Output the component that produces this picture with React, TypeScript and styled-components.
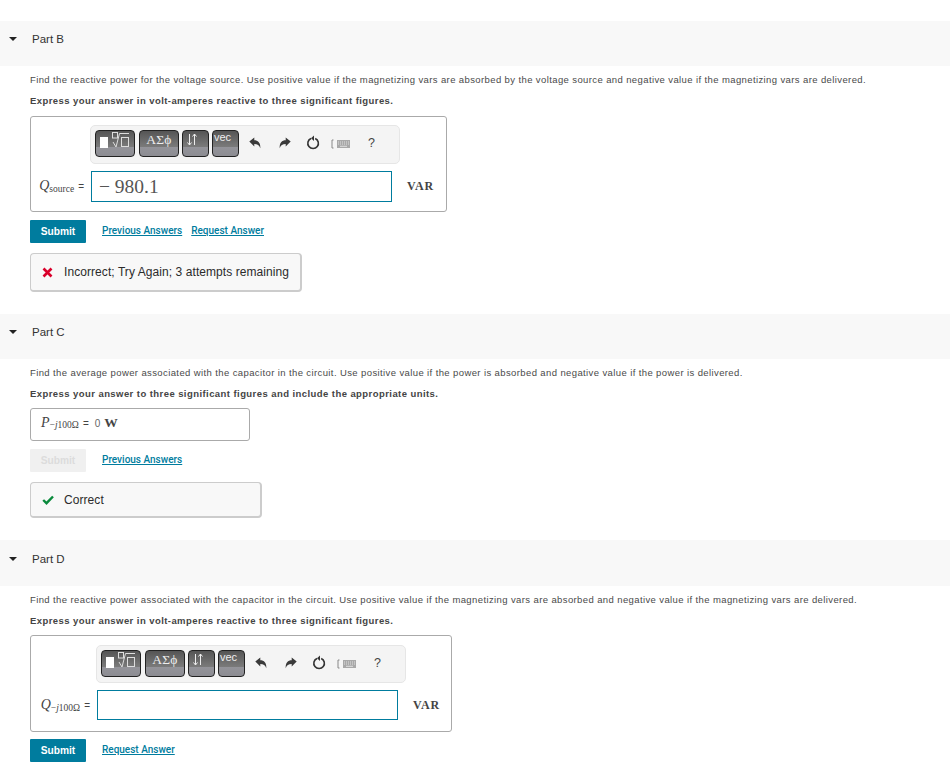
import styled, { createGlobalStyle } from "styled-components";

const Global = createGlobalStyle`
  html, body { margin: 0; padding: 0; background: #fff; }
  body { font-family: "Liberation Sans", Arial, sans-serif; color: #333; }
`;

const Page = styled.div`
  width: 950px;
  height: 777px;
  overflow: hidden;
  padding-top: 21px;
  box-sizing: border-box;
`;

const PartHeader = styled.div<{ $tall?: boolean }>`
  height: ${(p) => (p.$tall ? 46 : 45)}px;
  background: #f8f8f8;
  display: flex;
  padding-top: ${(p) => (p.$tall ? 13 : 12)}px;
  box-sizing: border-box;
  align-items: flex-start;
  font-size: 11.5px;
  line-height: 13px;
  color: #333;
`;

const Caret = styled.span`
  width: 0;
  height: 0;
  margin: 4px 15px 0 9px;
  border-left: 4px solid transparent;
  border-right: 4px solid transparent;
  border-top: 4px solid #222;
`;

const PartBody = styled.div<{ $bottom: number }>`
  padding: 7px 0 0 30px;
  margin-bottom: ${(p) => p.$bottom}px;
`;

const Desc = styled.p`
  margin: 0 0 8px;
  font-size: 9.5px;
  line-height: 13px;
  letter-spacing: 0.39px;
  color: #4a4a4a;
  white-space: nowrap;
`;

const Express = styled(Desc)<{ $mb?: number }>`
  font-weight: bold;
  letter-spacing: 0.43px;
  color: #444;
  margin-bottom: ${(p) => p.$mb ?? 9}px;
`;

const AnswerBox = styled.div<{ $w: number; $h: number; $labelW: number; $pt: number }>`
  width: ${(p) => p.$w}px;
  height: ${(p) => p.$h}px;
  box-sizing: border-box;
  border: 1px solid #aaa;
  border-radius: 3px;
  padding: ${(p) => p.$pt}px 0 0 ${(p) => p.$labelW}px;
`;

const Toolbar = styled.div<{ $h: number }>`
  width: 310px;
  height: ${(p) => p.$h}px;
  box-sizing: border-box;
  background: #f4f4f4;
  border: 1px solid #e6e6e6;
  border-radius: 5px;
  display: flex;
  align-items: flex-start;
  padding: 4px 0 0 4px;
  position: relative;
  left: -1px;
`;

const TemplateBtn = styled.div<{ $w: number; $mr: number; $left?: number }>`
  width: ${(p) => p.$w}px;
  height: 27px;
  margin-right: ${(p) => p.$mr}px;
  box-sizing: border-box;
  border: 1px solid #222;
  border-radius: 4px;
  background: linear-gradient(#555 0, #7b7b7b 16px, #94949a 16px, #8c8c92 100%);
  color: #eee;
  display: flex;
  justify-content: ${(p) => (p.$left !== undefined ? "flex-start" : "center")};
  padding: 2px 0 0 ${(p) => p.$left ?? 0}px;
  overflow: hidden;
`;

const GreekText = styled.span`
  font-family: "Liberation Serif", serif;
  font-size: 13.5px;
  line-height: 14px;
  letter-spacing: 0.2px;
`;

const VecText = styled.span`
  font-size: 11px;
  line-height: 11px;
  color: #eee;
  margin-top: -1px;
`;

const ToolIcon = styled.svg<{ $ml: number; $mt?: number }>`
  display: block;
  margin-left: ${(p) => p.$ml}px;
  margin-top: ${(p) => p.$mt ?? 7}px;
  flex: none;
`;

const BtnGlyph = styled.svg`
  display: block;
  overflow: visible;
  flex: none;
`;

const HelpMark = styled.span`
  font-size: 12.5px;
  line-height: 14px;
  margin: 6px 0 0 17px;
  color: #444;
`;

const AnswerRow = styled.div`
  display: flex;
  align-items: center;
  margin-top: 7px;
  position: relative;
`;

const MathLabel = styled.div`
  position: absolute;
  right: 100%;
  margin-right: 7px;
  top: 7px;
  white-space: nowrap;
  display: flex;
  align-items: baseline;
  font-size: 10px;
  color: #444;
`;

const MathVar = styled.i`
  font-family: "Liberation Serif", serif;
  font-size: 14px;
  color: #444;
`;

const MathSub = styled.span`
  font-family: "Liberation Serif", serif;
  font-size: 9.5px;
  color: #444;
  margin: 0 4px 0 0;
  position: relative;
  top: 2px;
`;

const MathInput = styled.div<{ $h: number }>`
  width: 301px;
  height: ${(p) => p.$h}px;
  box-sizing: border-box;
  border: 1px solid #007c9e;
  padding-left: 7px;
  font-family: "Liberation Serif", serif;
  font-size: 19.5px;
  line-height: 30px;
  color: #555;
  background: #fff;
`;

const Unit = styled.span`
  font-family: "Liberation Serif", serif;
  font-weight: bold;
  font-size: 12px;
  letter-spacing: 0.8px;
  color: #444;
  margin-left: 15px;
`;

const StaticBox = styled.div`
  width: 220px;
  height: 33px;
  box-sizing: border-box;
  border: 1px solid #aaa;
  border-radius: 3px;
  padding: 0 0 3px 10px;
  display: flex;
  align-items: center;
  font-size: 10px;
  color: #444;
`;

const ZeroValue = styled.span`
  margin-left: 6px;
  color: #666;
`;

const StaticUnit = styled.span`
  font-family: "Liberation Serif", serif;
  font-weight: bold;
  font-size: 13.5px;
  color: #444;
  margin-left: 4px;
`;

const ActionRow = styled.div<{ $mt: number }>`
  display: flex;
  align-items: center;
  margin-top: ${(p) => p.$mt}px;
  height: 23px;
`;

const SubmitBtn = styled.div<{ $off?: boolean }>`
  width: 56px;
  height: 23px;
  border-radius: 1px;
  background: ${(p) => (p.$off ? "#f0f0f0" : "#007c9e")};
  color: ${(p) => (p.$off ? "#dcdcdc" : "#fff")};
  font-size: 10.2px;
  font-weight: bold;
  line-height: 23px;
  text-align: center;
  margin-right: 16px;
`;

const ActionLink = styled.a`
  font-family: Roboto, "Liberation Sans", sans-serif;
  font-size: 10px;
  font-weight: 500;
  line-height: 12px;
  margin: -2px 9px 0 0;
  color: #007c9e;
  text-decoration: underline;
`;

const Feedback = styled.div<{ $w: number; $h: number; $mt: number }>`
  width: ${(p) => p.$w}px;
  height: ${(p) => p.$h}px;
  margin-top: ${(p) => p.$mt}px;
  box-sizing: border-box;
  background: #f8f8f8;
  border: 1px solid #ccc;
  border-right-width: 2px;
  border-bottom-width: 2px;
  border-radius: 4px;
  display: flex;
  align-items: center;
  padding-left: 11px;
  font-size: 12px;
  letter-spacing: 0.07px;
  color: #2b2b2b;
  white-space: nowrap;
`;

const FeedbackIcon = styled.svg<{ $mr: number }>`
  flex: none;
  margin-right: ${(p) => p.$mr}px;
`;

function MatrixIcon() {
  return (
    <BtnGlyph width="34" height="15" viewBox="0 0 34 15">
      <rect x="2" y="4" width="8" height="11" fill="#fff" />
      <rect x="14.500" y="-0.500" width="5" height="5.500" fill="none" stroke="#ddd" />
      <path d="M15 9l3 5 3.500-13.500H31" fill="none" stroke="#ddd" />
      <rect x="23.500" y="4.500" width="7" height="9" fill="none" stroke="#ddd" />
    </BtnGlyph>
  );
}

function ArrowsIcon() {
  return (
    <BtnGlyph width="12" height="13" viewBox="0 0 12 13">
      <path d="M3.500 1v11M1.500 9.500l2 2.500 2-2.500M8.500 12V1M6.500 3.500l2-2.500 2 2.500" fill="none" stroke="#eee" strokeWidth="1" />
    </BtnGlyph>
  );
}

function Undo({ ml }: { ml: number }) {
  return (
    <ToolIcon $ml={ml} width="12" height="12" viewBox="0 0 12 12">
      <path d="M0.300 4.500L5.300 0.500v2.700c3.700 0 6.400 2.500 6 8-1-3-2.800-4.200-6-4.200v2.500z" fill="#3a3a3a" />
    </ToolIcon>
  );
}

function Redo({ ml }: { ml: number }) {
  return (
    <ToolIcon $ml={ml} width="12" height="12" viewBox="0 0 12 12">
      <path d="M11.700 4.500L6.700 0.500v2.700c-3.700 0-6.400 2.500-6 8 1-3 2.800-4.200 6-4.200v2.500z" fill="#3a3a3a" />
    </ToolIcon>
  );
}

function Reset({ ml }: { ml: number }) {
  return (
    <ToolIcon $ml={ml} $mt={5} width="14" height="15" viewBox="0 0 14 15">
      <path d="M5 3.400a5.300 5.300 0 1 0 4.200 0" fill="none" stroke="#333" strokeWidth="1.600" />
      <path d="M8 0.500v5.400l-3-2.700z" fill="#333" />
    </ToolIcon>
  );
}

function Keyboard({ ml }: { ml: number }) {
  return (
    <ToolIcon $ml={ml} $mt={9} width="20" height="10" viewBox="0 0 20 10">
      <path d="M2.500 1H1v8h1.500" fill="none" stroke="#888" strokeWidth="1" />
      <rect x="6" y="1" width="13" height="8" fill="#a8a8a8" />
      <path d="M7 3h11M7 5h11" stroke="#eee" strokeWidth="0.800" strokeDasharray="1 1" />
      <path d="M9 7.300h7" stroke="#eee" strokeWidth="0.800" />
    </ToolIcon>
  );
}

function MathToolbar({ h }: { h: number }) {
  return (
    <Toolbar $h={h}>
      <TemplateBtn $w={40} $mr={4} $left={2}>
        <MatrixIcon />
      </TemplateBtn>
      <TemplateBtn $w={40} $mr={3}>
        <GreekText>ΑΣϕ</GreekText>
      </TemplateBtn>
      <TemplateBtn $w={27} $mr={3} $left={3}>
        <ArrowsIcon />
      </TemplateBtn>
      <TemplateBtn $w={27} $mr={0} $left={1}>
        <VecText>vec</VecText>
      </TemplateBtn>
      <Undo ml={10} />
      <Redo ml={18} />
      <Reset ml={15} />
      <Keyboard ml={11} />
      <HelpMark>?</HelpMark>
    </Toolbar>
  );
}

export default function App() {
  return (
    <Page>
      <Global />

      <PartHeader>
        <Caret />
        Part B
      </PartHeader>
      <PartBody $bottom={22}>
        <Desc>
          Find the reactive power for the voltage source. Use positive value if the magnetizing vars are absorbed by the voltage source and negative value if the magnetizing vars are delivered.
        </Desc>
        <Express>Express your answer in volt-amperes reactive to three significant figures.</Express>
        <AnswerBox $w={417} $h={96} $labelW={60} $pt={8}>
          <MathToolbar h={39} />
          <AnswerRow>
            <MathLabel>
              <MathVar>Q</MathVar>
              <MathSub>source</MathSub>=
            </MathLabel>
            <MathInput $h={31}>− 980.1</MathInput>
            <Unit>VAR</Unit>
          </AnswerRow>
        </AnswerBox>
        <ActionRow $mt={8}>
          <SubmitBtn>Submit</SubmitBtn>
          <ActionLink>Previous Answers</ActionLink>
          <ActionLink>Request Answer</ActionLink>
        </ActionRow>
        <Feedback $w={272} $h={39} $mt={10}>
          <FeedbackIcon $mr={11} width="11" height="11" viewBox="0 0 11 11">
            <path d="M1.500 1.500l8 8M9.500 1.500l-8 8" stroke="#d9002b" strokeWidth="2.600" />
          </FeedbackIcon>
          Incorrect; Try Again; 3 attempts remaining
        </Feedback>
      </PartBody>

      <PartHeader>
        <Caret />
        Part C
      </PartHeader>
      <PartBody $bottom={22}>
        <Desc>
          Find the average power associated with the capacitor in the circuit. Use positive value if the power is absorbed and negative value if the power is delivered.
        </Desc>
        <Express $mb={8}>Express your answer to three significant figures and include the appropriate units.</Express>
        <StaticBox>
          <MathVar>P</MathVar>
          <MathSub>−<i>j</i>100Ω</MathSub>=
          <ZeroValue>0</ZeroValue>
          <StaticUnit>W</StaticUnit>
        </StaticBox>
        <ActionRow $mt={8}>
          <SubmitBtn $off>Submit</SubmitBtn>
          <ActionLink>Previous Answers</ActionLink>
        </ActionRow>
        <Feedback $w={232} $h={36} $mt={10}>
          <FeedbackIcon $mr={10} width="12" height="10" viewBox="0 0 12 10">
            <path d="M1.200 5l3.300 3.200L11 1.500" fill="none" stroke="#0a8a3c" strokeWidth="2.400" />
          </FeedbackIcon>
          Correct
        </Feedback>
      </PartBody>

      <PartHeader $tall>
        <Caret />
        Part D
      </PartHeader>
      <PartBody $bottom={0}>
        <Desc>
          Find the reactive power associated with the capacitor in the circuit. Use positive value if the magnetizing vars are absorbed and negative value if the magnetizing vars are delivered.
        </Desc>
        <Express $mb={8}>Express your answer in volt-amperes reactive to three significant figures.</Express>
        <AnswerBox $w={422} $h={97} $labelW={66} $pt={9}>
          <MathToolbar h={38} />
          <AnswerRow>
            <MathLabel>
              <MathVar>Q</MathVar>
              <MathSub>−<i>j</i>100Ω</MathSub>=
            </MathLabel>
            <MathInput $h={30} />
            <Unit>VAR</Unit>
          </AnswerRow>
        </AnswerBox>
        <ActionRow $mt={7}>
          <SubmitBtn>Submit</SubmitBtn>
          <ActionLink>Request Answer</ActionLink>
        </ActionRow>
      </PartBody>
    </Page>
  );
}
